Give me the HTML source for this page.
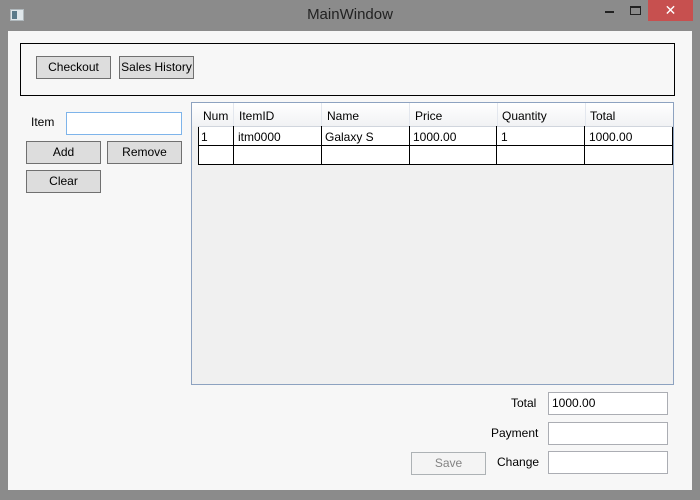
<!DOCTYPE html>
<html><head><style>
*{margin:0;padding:0;box-sizing:border-box}
body{width:700px;height:500px;background:#8b8b8b;position:relative;font-family:"Segoe UI","Liberation Sans",sans-serif;font-size:12px;color:#000;overflow:hidden}
.a{position:absolute}
.btn{position:absolute;background:#dddddd;border:1px solid #707070;text-align:center;line-height:21px;font-size:12px}
.tb{position:absolute;background:#fff;border:1px solid #abadb3}
.l{position:absolute;font-size:12px}
</style></head><body>
<div class="a" style="left:0;top:0;width:700px;height:31px;background:#8b8b8b"></div>
<div class="a" style="left:10px;top:9px;width:14px;height:12px;background:#dfe6ea;border:1px solid #b0b8bc"></div>
<div class="a" style="left:12px;top:11px;width:5px;height:8px;background:#5a7a8a"></div>
<div class="a" style="left:0;top:6px;width:700px;text-align:center;font-size:15px;color:#222">MainWindow</div>
<div class="a" style="left:605px;top:11px;width:9px;height:2px;background:#222"></div>
<div class="a" style="left:630px;top:6px;width:11px;height:9px;border:1px solid #222;border-top-width:2px"></div>
<div class="a" style="left:648px;top:0;width:45px;height:21px;background:#c7504f;color:#fff;text-align:center;font-size:14px;line-height:21px">✕</div>
<div class="a" style="left:8px;top:31px;width:684px;height:459px;background:#f7f7f7"></div>
<div class="a" style="left:20px;top:43px;width:655px;height:53px;border:1px solid #000"></div>
<div class="btn" style="left:36px;top:56px;width:75px;height:23px">Checkout</div>
<div class="btn" style="left:119px;top:56px;width:75px;height:23px">Sales History</div>
<div class="l" style="left:31px;top:115px">Item</div>
<div class="tb" style="left:66px;top:112px;width:116px;height:23px;border-color:#7eb4ea"></div>
<div class="btn" style="left:26px;top:141px;width:75px;height:23px">Add</div>
<div class="btn" style="left:107px;top:141px;width:75px;height:23px">Remove</div>
<div class="btn" style="left:26px;top:170px;width:75px;height:23px">Clear</div>
<div class="a" style="left:191px;top:102px;width:483px;height:283px;background:#f0f0f0;border:1px solid #8da2c0"></div>
<div class="a" style="left:192px;top:103px;width:481px;height:23px;background:linear-gradient(#fff,#f1f2f4)"></div>
<div class="a" style="left:198px;top:126px;width:475px;height:39px;background:#fff;border:1px solid #000;border-top:none"></div>
<div class="a" style="left:198px;top:126px;width:475px;height:1px;background:#d0d5dd"></div>
<div class="a" style="left:198px;top:145px;width:475px;height:1px;background:#000"></div>
<div class="a" style="left:233px;top:103px;width:1px;height:23px;background:#e3e7ee"></div>
<div class="a" style="left:321px;top:103px;width:1px;height:23px;background:#e3e7ee"></div>
<div class="a" style="left:409px;top:103px;width:1px;height:23px;background:#e3e7ee"></div>
<div class="a" style="left:497px;top:103px;width:1px;height:23px;background:#e3e7ee"></div>
<div class="a" style="left:585px;top:103px;width:1px;height:23px;background:#e3e7ee"></div>
<div class="a" style="left:233px;top:126px;width:1px;height:39px;background:#000"></div>
<div class="a" style="left:321px;top:126px;width:1px;height:39px;background:#000"></div>
<div class="a" style="left:409px;top:126px;width:1px;height:39px;background:#000"></div>
<div class="a" style="left:496px;top:126px;width:1px;height:39px;background:#000"></div>
<div class="a" style="left:584px;top:126px;width:1px;height:39px;background:#000"></div>
<div class="l" style="left:203px;top:109px">Num</div>
<div class="l" style="left:239px;top:109px">ItemID</div>
<div class="l" style="left:327px;top:109px">Name</div>
<div class="l" style="left:415px;top:109px">Price</div>
<div class="l" style="left:502px;top:109px">Quantity</div>
<div class="l" style="left:590px;top:109px">Total</div>
<div class="l" style="left:201px;top:130px">1</div>
<div class="l" style="left:238px;top:130px">itm0000</div>
<div class="l" style="left:325px;top:130px">Galaxy S</div>
<div class="l" style="left:413px;top:130px">1000.00</div>
<div class="l" style="left:501px;top:130px">1</div>
<div class="l" style="left:589px;top:130px">1000.00</div>
<div class="l" style="left:511px;top:396px">Total</div>
<div class="tb" style="left:548px;top:392px;width:120px;height:23px;padding:3px 0 0 3px">1000.00</div>
<div class="l" style="left:491px;top:426px">Payment</div>
<div class="tb" style="left:548px;top:422px;width:120px;height:23px"></div>
<div class="l" style="left:497px;top:455px">Change</div>
<div class="tb" style="left:548px;top:451px;width:120px;height:23px"></div>
<div class="btn" style="left:411px;top:452px;width:75px;height:23px;background:#f4f4f4;border-color:#adb2b5;color:#838383">Save</div>
</body></html>
